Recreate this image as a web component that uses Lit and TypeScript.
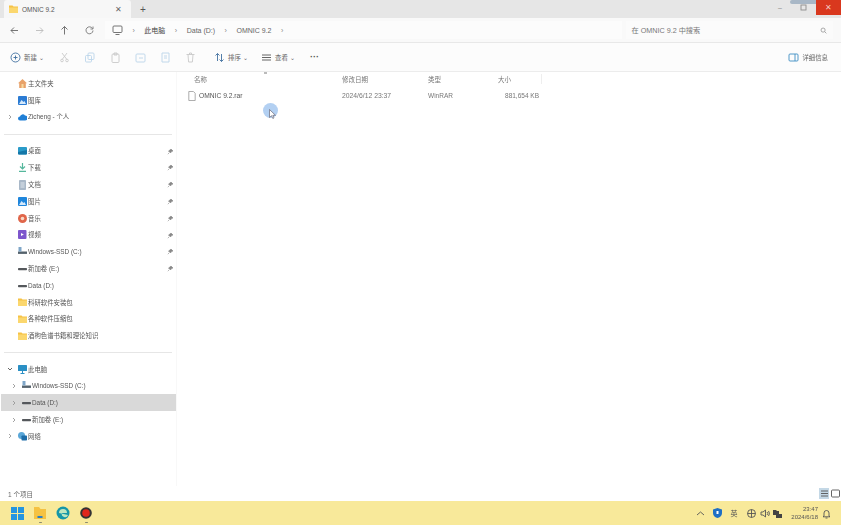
import { LitElement, html, css, svg } from "lit";
import { customElement } from "lit/decorators.js";

const S = (w: number, h: number, body: unknown) => html`<svg width=${w} height=${h} viewBox="0 0 ${w} ${h}" class="ic">${body}</svg>`;
const folder = S(9, 8, svg`<path d="M0 .5h3.500l1 1H9V8H0z" fill="#f6c244"/><path d="M0 2.500h9V8H0z" fill="#fbd76e"/>`);
const drive = S(9, 9, svg`<rect x="0" y="4" width="9" height="2.200" rx=".8" fill="#55585c"/>`);
const ssd = S(9, 9, svg`<rect x="0" y="4.500" width="9" height="2.400" fill="#55626c"/><path d="M.5 0h3v4.500h-3z" fill="#7fa6c8"/>`);
const pin = S(7, 7, svg`<path d="M4 1l2 2-1.500 .6-1 1.400-2-2 1.400-1zM2 5L.8 6.200" fill="#888" stroke="#888" stroke-width=".6"/>`);
const icons: Record<string, unknown> = {
  home: S(9, 9, svg`<path d="M4.500 0L9 4.200H7.800V9H1.200V4.200H0z" fill="#e8a26a"/><rect x="3.500" y="5" width="2" height="4" fill="#f7d9a0"/>`),
  gallery: S(9, 9, svg`<rect width="9" height="9" rx="1" fill="#2b7bd3"/><path d="M1 8l2.500-4 2 2 1-1 1.500 3z" fill="#d5e9fb"/>`),
  cloud: S(9, 8, svg`<path d="M2 7.500a2 2 0 0 1 0-4 2.800 2.800 0 0 1 5-1A2.400 2.400 0 0 1 7 7.500z" fill="#1f7fd6"/>`),
  desktop: S(9, 8, svg`<rect width="9" height="7.500" rx="1" fill="#2a9bc9"/><path d="M0 5l9-2v3.500a1 1 0 0 1-1 1H1a1 1 0 0 1-1-1z" fill="#1577a8"/>`),
  down: S(9, 9, svg`<path d="M4.500 0v5M2 3.500L4.500 6 7 3.500M1 8.300h7" fill="none" stroke="#55b79c" stroke-width="1.200"/>`),
  doc: S(9, 10, svg`<rect x="1" y="0" width="7" height="10" rx=".8" fill="#a9b8c8"/><path d="M2.500 3h4M2.500 5h4M2.500 7h4" stroke="#eef2f6" stroke-width=".8"/>`),
  pic: S(9, 9, svg`<rect width="9" height="9" rx="1" fill="#1f86dc"/><path d="M1 8l2.500-4 2 2 1-1 1.500 3z" fill="#d5e9fb"/>`),
  music: S(9, 9, svg`<circle cx="4.500" cy="4.500" r="4.500" fill="#e0664a"/><circle cx="4.500" cy="4.500" r="1.800" fill="#f9d9c6"/>`),
  video: S(9, 9, svg`<rect width="8.500" height="9" rx="1" fill="#7d56cc"/><path d="M3 3l2.800 1.500L3 6z" fill="#fff"/>`),
  ssd, drive, folder,
  pc: S(9, 9, svg`<rect width="9" height="6" rx=".6" fill="#2a8fc4"/><path d="M2.500 8.500h4M4.500 6v2.500" stroke="#2a8fc4"/>`),
  net: S(9, 9, svg`<circle cx="3.500" cy="3.500" r="3.500" fill="#5aa7d8"/><rect x="3.500" y="3.500" width="5.500" height="5" rx=".7" fill="#1e6da8"/>`),
};

type Nav = { ic: string; t: string; p?: boolean; cls?: string; ch?: "r" | "d" };
const quick: Nav[] = [
  { ic: "home", t: "主文件夹" },
  { ic: "gallery", t: "图库" },
  { ic: "cloud", t: "Zicheng - 个人", ch: "r" },
];
const pinned: Nav[] = [
  { ic: "desktop", t: "桌面", p: true },
  { ic: "down", t: "下载", p: true },
  { ic: "doc", t: "文档", p: true },
  { ic: "pic", t: "图片", p: true },
  { ic: "music", t: "音乐", p: true },
  { ic: "video", t: "视频", p: true },
  { ic: "ssd", t: "Windows-SSD (C:)", p: true },
  { ic: "drive", t: "新加卷 (E:)", p: true },
  { ic: "drive", t: "Data (D:)" },
  { ic: "folder", t: "科研软件安装包" },
  { ic: "folder", t: "各种软件压缩包" },
  { ic: "folder", t: "酒枸色谱书籍和理论知识" },
];
const pc: Nav[] = [
  { ic: "pc", t: "此电脑", ch: "d" },
  { ic: "ssd", t: "Windows-SSD (C:)", ch: "r", cls: "sub" },
  { ic: "drive", t: "Data (D:)", ch: "r", cls: "sub sel" },
  { ic: "drive", t: "新加卷 (E:)", ch: "r", cls: "sub" },
  { ic: "net", t: "网络", ch: "r" },
];

const line = (d: unknown, w = 11, h = 11, c = "#8d8d8d") =>
  html`<svg width=${w} height=${h} viewBox="0 0 11 11" fill="none" stroke=${c} stroke-width=".9" class="ic">${d}</svg>`;

const chev = (k: "r" | "d") =>
  html`<svg class="ch" width="8" height="8" viewBox="0 0 8 8" fill="none" stroke=${k === "d" ? "#555" : "#999"} stroke-width=".9">${k === "d" ? svg`<path d="M2 3l2 2 2-2"/>` : svg`<path d="M3 2l2 2-2 2"/>`}</svg>`;

@customElement("app-root")
export class AppRoot extends LitElement {
  static styles = css`
    :host { display: block; width: 841px; height: 525px; overflow: hidden; position: relative; background: #fff;
      font-family: "Liberation Sans", "Noto Sans CJK SC", sans-serif; font-size: 6.500px; color: #555; }
    .win { display: flex; flex-direction: column; height: 525px; filter: blur(.35px); }
    .ic { display: block; flex: none; }
    .title { height: 18px; background: #e6e6e6; display: flex; align-items: stretch; flex: none; }
    .tab { width: 127px; margin-left: 4px; background: #f7f7f7; border-radius: 3px 3px 0 0; display: flex; align-items: center; padding: 0 9px 0 5px; gap: 4px; box-sizing: border-box; }
    .tab span { flex: 1; color: #555; font-size: 6.500px; }
    .tab b { font-weight: 400; color: #666; font-size: 8px; }
    .plus { margin-left: 6px; width: 12px; display: flex; align-items: center; justify-content: center; color: #555; font-size: 10px; }
    .spacer { flex: 1; }
    .ctl { display: flex; align-items: flex-start; }
    .ctl div { display: flex; justify-content: center; align-items: center; height: 15px; color: #888; font-size: 7px; }
    .ctl .min { width: 20px; }
    .ctl .max { width: 26px; }
    .ctl .close { width: 25px; background: #d9381e; color: #f6c9c0; font-size: 8px; }
    .addr { height: 24px; flex: none; background: #f9f9f9; border-bottom: 1px solid #e8e8e8; display: flex; align-items: center; }
    .navb { display: flex; width: 105px; padding-left: 9px; box-sizing: border-box; gap: 14px; }
    .crumb { width: 517px; height: 18px; background: #fcfcfc; display: flex; align-items: center; gap: 9.500px; padding-left: 7px; box-sizing: border-box; color: #666; font-size: 7px; }
    .crumb .strong { color: #444; }
    .crumb i { font-style: normal; color: #888; }
    .search { margin-left: 4px; width: 207px; height: 18px; background: #fbfbfb; display: flex; align-items: center; justify-content: space-between; padding: 0 5px 0 5.500px; box-sizing: border-box; color: #777; font-size: 7.200px; }
    .tools { height: 28px; flex: none; background: #fcfcfc; border-bottom: 1px solid #ececec; display: flex; align-items: center; padding-left: 10px; color: #666; font-size: 6.400px; }
    .tools .new { display: flex; align-items: center; gap: 3px; width: 49px; }
    .tools .gray { display: flex; gap: 14.300px; width: 155px; opacity: .45; box-sizing: border-box; }
    .tool { display: flex; align-items: center; gap: 3px; width: 47px; }
    .dots { font-size: 9px; margin-left: 2px; color: #555; font-weight: 700; }
    .det { display: flex; align-items: center; gap: 3px; padding-right: 13px; }
    .main { flex: 1; display: flex; min-height: 0; }
    .side { width: 177px; flex: none; padding-top: 3px; box-sizing: border-box; border-right: 1px solid #f8f8f8; }
    .row { height: 16.800px; display: flex; align-items: center; position: relative; padding-left: 18px; gap: 1px; color: #555; font-size: 6.400px; }
    .row .ch { position: absolute; left: 6px; top: 4.400px; }
    .row.sub { padding-left: 21px; margin-left: 1px; }
    .row.sub .ch { left: 8.500px; }
    .row.sel { background: #d9d9d9; }
    .row .pin { position: absolute; right: 2px; top: 5px; }
    .sep { height: 1px; background: #e6e6e6; margin: 8.400px 4px 7.800px 4px; }
    .sep.lo { margin-top: 7.800px; }
    .list { flex: 1; position: relative; }
    .hd, .fr { display: grid; grid-template-columns: 148px 86px 70px 44px; padding-left: 17px; align-items: center; }
    .hd { height: 14px; color: #777; font-size: 6.500px; }
    .hd div:last-child { border-right: 1px solid #eee; }
    .fr { height: 17px; margin-top: 1px; color: #777; font-size: 6.500px; }
    .fr .nm { display: flex; align-items: center; gap: 2px; margin-left: -7px; color: #555; font-size: 6.700px; }
    .fr .dt { font-size: 6.800px; }
    .fr .sz { text-align: right; padding-right: 3px; }
    .status { height: 15px; flex: none; background: #fff; display: flex; align-items: center; padding-left: 8px; color: #666; font-size: 6.500px; }
    .view { margin-left: auto; display: flex; gap: 1px; padding-right: 1px; }
    .view .on { background: #c4d8e6; }
    .view div { width: 10px; height: 11px; display: flex; align-items: center; justify-content: center; }
    .task { height: 24px; flex: none; background: #f8e99a; display: flex; align-items: center; padding-left: 11px; color: #555; }
    .apps { display: flex; gap: 9px; align-items: center; }
    .app { position: relative; }
    .app.on::after { content: ""; position: absolute; left: 5.500px; bottom: -3px; width: 3px; height: 1.500px; background: #8a8a70; border-radius: 1px; }
    .tray { margin-left: auto; display: grid; grid-template-columns: 17px 17px 17px 17px 11.500px 12px 37px 12px; justify-items: center; align-items: center; padding-right: 9px; font-size: 7px; }
    .clock { text-align: right; font-size: 6px; line-height: 8px; justify-self: end; padding-right: 2px; }
    .hl { position: absolute; left: 263px; top: 103px; width: 15px; height: 15px; border-radius: 50%; background: #b3d0f2; }
    .cur { position: absolute; left: 269px; top: 109px; }
    .slider { position: absolute; left: 790px; top: 0; width: 26px; height: 4px; background: #a8b7c6; border-radius: 3px 0 0 3px; }
    .tick { position: absolute; left: 264px; top: 72px; width: 3px; height: 2px; background: #bbb; }
  `;

  private nav(n: Nav) {
    return html`<div class="row ${n.cls ?? ""}">
      ${n.ch ? chev(n.ch) : ""}
      ${icons[n.ic]}<span>${n.t}</span>
      ${n.p ? html`<span class="pin">${pin}</span>` : ""}
    </div>`;
  }

  render() {
    return html`<div class="win">
      <div class="title">
        <div class="tab">${folder}<span>OMNIC 9.2</span><b>✕</b></div>
        <div class="plus">+</div>
        <div class="spacer"></div>
        <div class="ctl">
          <div class="min">–</div>
          <div class="max">${line(svg`<rect x="3" y="3" width="5" height="5"/>`)}</div>
          <div class="close">✕</div>
        </div>
      </div>
      <div class="addr">
        <div class="navb">
          ${line(svg`<path d="M9 5.500H2M5 2.500l-3 3 3 3"/>`, 11, 11, "#666")}
          ${line(svg`<path d="M2 5.500h7M6 2.500l3 3-3 3"/>`, 11, 11, "#bbb")}
          ${line(svg`<path d="M5.500 9.500v-8M2.500 4.500l3-3 3 3"/>`, 11, 11, "#666")}
          ${line(svg`<path d="M8.500 3.500a3.500 3.500 0 1 0 .5 2M9 1.500v2.500H6.500"/>`, 11, 11, "#777")}
        </div>
        <div class="crumb">
          ${line(svg`<rect x="1" y="1" width="9" height="6.500" rx="1"/><path d="M3.500 9.500h4"/>`, 11, 11, "#666")}
          <i>›</i><span class="strong">此电脑</span><i>›</i><span>Data (D:)</span><i>›</i><span>OMNIC 9.2</span><i>›</i>
        </div>
        <div class="search"><span>在 OMNIC 9.2 中搜索</span>${line(svg`<circle cx="5" cy="5" r="2.500"/><path d="M7 7l2 2"/>`, 9, 9)}</div>
      </div>
      <div class="tools">
        <div class="new">${line(svg`<circle cx="5.500" cy="5.500" r="4.500" stroke="#3f6f9f"/><path d="M5.500 3.500v4M3.500 5.500h4" stroke="#3f6f9f"/>`)}<span>新建 ⌄</span></div>
        <div class="gray">
          ${line(svg`<path d="M3 1l4.500 6M8 1L3.500 7"/><circle cx="3" cy="8.500" r="1.300"/><circle cx="8" cy="8.500" r="1.300"/>`)}
          ${line(svg`<rect x="4" y="1" width="6" height="6.500" rx="1" stroke="#6fa8d6"/><rect x="1.500" y="3.500" width="6" height="6.500" rx="1" stroke="#6fa8d6"/>`)}
          ${line(svg`<rect x="2" y="2" width="7" height="8.500" rx="1"/><path d="M4 1h3v2H4z"/>`)}
          ${line(svg`<rect x="1" y="2" width="9" height="8" rx="1" stroke="#6fa8d6"/><path d="M4 6h4" stroke="#6fa8d6"/>`)}
          ${line(svg`<path d="M2 1h7v9H2zM4 4h3M4 6h3" stroke="#6fa8d6"/>`)}
          ${line(svg`<path d="M1.500 2.500h8M3 2.500l.6 7.500h3.800l.6-7.500M4.500 2.500V1h2v1.500"/>`)}
        </div>
        <div class="tool">${line(svg`<path d="M3.500 9V1.500M1.500 3.500l2-2 2 2" stroke="#3f6f9f"/><path d="M7.500 2v7.500M5.500 7.500l2 2 2-2" stroke="#3f6f9f"/>`)}<span>排序 ⌄</span></div>
        <div class="tool">${line(svg`<path d="M1 3h9M1 5.500h9M1 8h9"/>`, 11, 11, "#555")}<span>查看 ⌄</span></div>
        <div class="dots">···</div>
        <div class="spacer"></div>
        <div class="det">${line(svg`<rect x="1" y="2" width="9" height="7" rx="1" stroke="#3f8fc4"/><path d="M7 2v7" stroke="#3f8fc4"/>`)}<span>详细信息</span></div>
      </div>
      <div class="main">
        <div class="side">
          ${quick.map((n) => this.nav(n))}
          <div class="sep"></div>
          ${pinned.map((n) => this.nav(n))}
          <div class="sep lo"></div>
          ${pc.map((n) => this.nav(n))}
        </div>
        <div class="list">
          <div class="hd"><div>名称</div><div>修改日期</div><div>类型</div><div>大小</div></div>
          <div class="fr">
            <div class="nm">${line(svg`<path d="M2 .5h5l2 2v8H2z"/>`, 10, 10, "#999")}<span>OMNIC 9.2.rar</span></div>
            <div class="dt">2024/6/12 23:37</div><div>WinRAR</div><div class="sz">881,654 KB</div>
          </div>
        </div>
      </div>
      <div class="status">
        <span>1 个项目</span>
        <div class="view">
          <div class="on">${line(svg`<path d="M2 3h7M2 5.500h7M2 8h7"/>`, 11, 11, "#555")}</div>
          <div>${line(svg`<rect x="1.500" y="2" width="8" height="7" rx="1"/>`, 11, 11, "#555")}</div>
        </div>
      </div>
      <div class="task">
        <div class="apps">
          <div class="app">${S(13, 13, svg`<path d="M0 0h6v6H0zM7 0h6v6H7zM0 7h6v6H0zM7 7h6v6H7z" fill="#2595e0"/>`)}</div>
          <div class="app on">${S(14, 14, svg`<path d="M1 1h5l1.500 2H13v10H1z" fill="#f5c242"/><rect x="4.500" y="10" width="5" height="2" fill="#2a7fc4"/>`)}</div>
          <div class="app">${S(14, 14, svg`<circle cx="7" cy="7" r="6.500" fill="#1596a8"/><path d="M3 7a4 4 0 0 1 8 0H6a2.500 2.500 0 0 0 6 2" fill="#bde6c0"/>`)}</div>
          <div class="app on">${S(14, 14, svg`<circle cx="7" cy="7" r="5.800" fill="#333"/><circle cx="7" cy="7" r="3.800" fill="#e0261c"/>`)}</div>
        </div>
        <div class="tray">
          ${line(svg`<path d="M2 7l3.500-3 3.500 3"/>`, 11, 11, "#555")}
          ${S(9, 10, svg`<path d="M4.500 0L9 1.500V5c0 3-2.500 4.500-4.500 5C2.500 9.500 0 8 0 5V1.500z" fill="#1f6fc4"/><rect x="3.500" y="3" width="2" height="3" fill="#fff"/>`)}
          <span>英</span>
          ${line(svg`<circle cx="5.500" cy="5.500" r="4"/><path d="M1.500 5.500h8M5.500 1.500v8"/>`, 11, 11, "#555")}
          ${line(svg`<path d="M1 4v3h2l2.500 2V2L3 4zM7 4a2 2 0 0 1 0 3M8.500 3a4 4 0 0 1 0 5"/>`, 11, 11, "#555")}
          ${S(9, 9, svg`<path d="M0 1h3l1 1h2v3h3v4H3V6H0z" fill="#444"/>`)}
          <div class="clock">23:47<br />2024/6/18</div>
          ${line(svg`<path d="M3 8V5a2.500 2.500 0 0 1 5 0v3l1 .8H2zM4.500 10h2"/>`, 11, 11, "#555")}
        </div>
      </div>
    </div>
    <div class="slider"></div>
    <div class="tick"></div>
    <div class="hl"></div>
    <svg class="cur" width="7" height="10" viewBox="0 0 7 10"><path d="M.5.5v8l2-1.800 1.300 2.800 1.200-.6L3.800 6.300H6.500z" fill="#fff" stroke="#667" stroke-width=".7"/></svg>`;
  }
}
